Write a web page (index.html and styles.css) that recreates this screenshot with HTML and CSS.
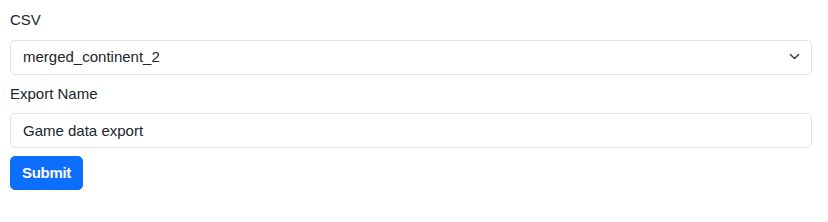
FILE: index.html
```html
<!DOCTYPE html>
<html lang="en">
<head>
    <meta charset="UTF-8">
    <meta name="viewport" content="width=device-width, initial-scale=1.0">
    <title>Export</title>
    <link rel="stylesheet" href="styles.css">
</head>
<body>
    <form class="export-form">
        <div class="field">
            <label for="csv" class="form-label">CSV</label>
            <div class="select-wrap">
                <select id="csv" class="form-control">
                    <option>merged_continent_2</option>
                </select>
                <svg class="chevron" viewBox="0 0 16 16" width="16" height="16">
                    <path d="M2 5l6 6 6-6" fill="none" stroke="#343a40" stroke-width="2" stroke-linecap="round" stroke-linejoin="round"/>
                </svg>
            </div>
        </div>
        <div class="field">
            <label for="name" class="form-label">Export Name</label>
            <input id="name" class="form-control" type="text" value="Game data export">
        </div>
        <button type="submit" class="btn">Submit</button>
    </form>
</body>
</html>
```

FILE: styles.css
```css
body {
    margin: 0;
    padding: 9px 16px 0 10px;
    font-family: 'Liberation Sans', Arial, sans-serif;
    font-size: 15px;
    line-height: 1.5;
    color: #212529;
    background: #fff;
}

.field {
    margin-bottom: 8px;
}

.form-label {
    display: block;
    margin-bottom: 8px;
}

.form-control {
    display: block;
    box-sizing: border-box;
    width: 100%;
    height: 35px;
    padding: 5px 12px;
    font-family: inherit;
    font-size: 15px;
    line-height: 1.5;
    color: #212529;
    background: #fff;
    border: 1px solid #dee2e6;
    border-radius: 5px;
}

select.form-control {
    appearance: none;
    -webkit-appearance: none;
    padding-right: 36px;
}

.select-wrap {
    position: relative;
}

.chevron {
    position: absolute;
    right: 12px;
    top: 11px;
    width: 11px;
    height: 11px;
    pointer-events: none;
}

.btn {
    display: block;
    height: 34px;
    padding: 5px 11px;
    font-family: inherit;
    font-size: 15px;
    font-weight: bold;
    letter-spacing: -0.3px;
    line-height: 1.5;
    color: #fff;
    background-color: #0d6efd;
    border: 1px solid #0d6efd;
    border-radius: 5px;
    cursor: pointer;
}
```
